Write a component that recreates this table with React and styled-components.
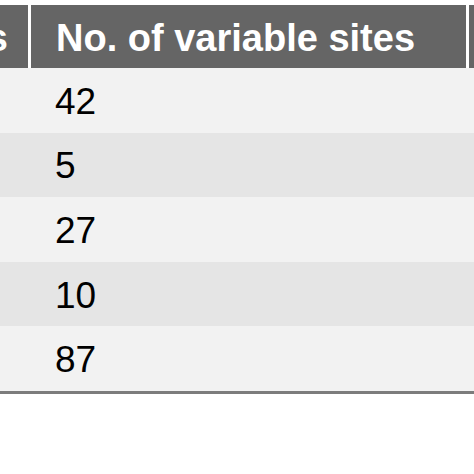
import React from "react";
import styled, { createGlobalStyle } from "styled-components";

const GlobalStyle = createGlobalStyle`
  html, body {
    margin: 0;
    padding: 0;
    background: #ffffff;
  }
  body {
    font-family: "Liberation Sans", Arial, sans-serif;
  }
`;

const rows = ["42", "5", "27", "10", "87"];

export default function App() {
  return (
    <>
      <GlobalStyle />
      <Page>
        <Table>
          <HeaderRow>
            <HeaderCell $align="right">Number of samples</HeaderCell>
            <HeaderCell>No. of variable sites</HeaderCell>
            <HeaderCell>Diversity</HeaderCell>
          </HeaderRow>
          {rows.map((value, i) => (
            <BodyRow key={i} $shade={i % 2 === 1}>
              <BodyCell />
              <BodyCell>{value}</BodyCell>
              <BodyCell />
            </BodyRow>
          ))}
        </Table>
      </Page>
    </>
  );
}

const Page = styled.div`
  width: 474px;
  height: 474px;
  overflow: hidden;
  background: #ffffff;
  padding-top: 5px;
  box-sizing: border-box;
`;

const Table = styled.div`
  width: 838px;
  margin-left: -172px;
  display: flex;
  flex-direction: column;
  border-bottom: 3px solid #7c7c7c;
`;

const HeaderRow = styled.div`
  display: grid;
  grid-template-columns: 200px 435px 200px;
  column-gap: 3px;
  height: 63px;
  background: #ffffff;
`;

const HeaderCell = styled.div`
  background: #656565;
  color: #ffffff;
  font-weight: bold;
  font-size: 38px;
  display: flex;
  align-items: center;
  justify-content: ${(p) => (p.$align === "right" ? "flex-end" : "flex-start")};
  padding: 3px ${(p) => (p.$align === "right" ? "20px" : "0")} 0 25px;
  white-space: nowrap;
  overflow: hidden;
`;

const BodyRow = styled.div`
  display: grid;
  grid-template-columns: 200px 435px 200px;
  column-gap: 3px;
  height: 64.6px;
  background: ${(p) => (p.$shade ? "#e5e5e5" : "#f2f2f2")};
`;

const BodyCell = styled.div`
  color: #000000;
  font-size: 37px;
  display: flex;
  align-items: center;
  padding: 3px 0 0 24px;
`;
